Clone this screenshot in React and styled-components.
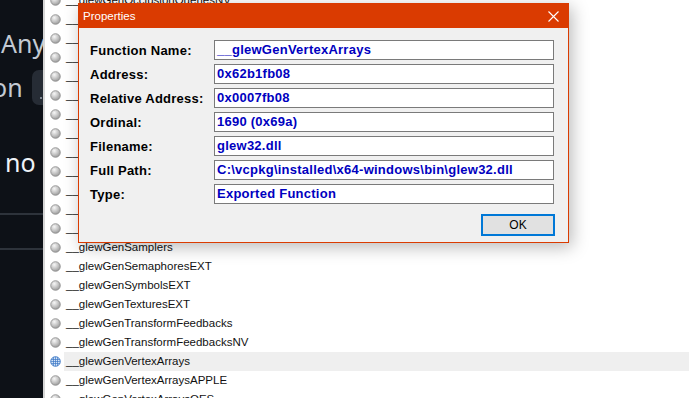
import React from "react";
import styled, { createGlobalStyle } from "styled-components";

const GlobalStyle = createGlobalStyle`
  html, body {
    margin: 0;
    padding: 0;
    background: #ffffff;
  }
  #root {
    width: 689px;
    height: 398px;
    overflow: hidden;
    position: relative;
  }
`;

const Screen = styled.div`
  display: flex;
  width: 689px;
  height: 398px;
  overflow: hidden;
  position: relative;
`;

/* ---------- dark editor strip on the left ---------- */

const DarkPanel = styled.div`
  width: 43px;
  flex: none;
  background: #0d1117;
  display: flex;
  flex-direction: column;
  overflow: hidden;
  font-family: "Noto Sans", "Open Sans", sans-serif;
  font-size: 25px;
`;

const DarkLine = styled.div`
  display: flex;
  align-items: center;
  height: 30px;
  line-height: 30px;
  white-space: nowrap;
  margin-top: ${(p) => p.$top}px;
  margin-left: ${(p) => p.$indent}px;
  color: ${(p) => (p.$bright ? "#eef3f8" : "#c3cad3")};
`;

const Chip = styled.span`
  flex: none;
  width: 30px;
  height: 35px;
  margin-left: 9px;
  border-radius: 7px;
  background: #262c35;
  position: relative;
  &::after {
    content: "";
    position: absolute;
    left: 8px;
    bottom: 6px;
    width: 2px;
    height: 2px;
    background: #7d8590;
  }
`;

const Rule = styled.div`
  height: 2px;
  flex: none;
  margin-top: ${(p) => p.$top}px;
  background: #2d333b;
`;

/* ---------- export list ---------- */

const ListPane = styled.div`
  flex: 1;
  background: #ffffff;
  border-left: 2px solid #d6d6d6;
  overflow: hidden;
  font-family: "Liberation Sans", Arial, sans-serif;
  font-size: 11.5px;
  color: #111111;
`;

const List = styled.div`
  margin-top: -9px;
  display: flex;
  flex-direction: column;
`;

const Row = styled.div`
  display: flex;
  align-items: center;
  height: 19px;
  padding-left: 5px;
`;

const RowLabel = styled.span`
  flex: 1;
  height: 19px;
  line-height: 19px;
  padding-left: 2px;
  margin-left: 3px;
  white-space: nowrap;
  background: ${(p) => (p.$selected ? "#efefef" : "transparent")};
`;

const Bullet = () => (
  <svg width="11" height="11" viewBox="0 0 11 11">
    <defs>
      <radialGradient id="ball" cx="0.38" cy="0.32" r="0.7">
        <stop offset="0" stopColor="#f7f7f7" />
        <stop offset="0.55" stopColor="#c6c6c6" />
        <stop offset="1" stopColor="#9a9a9a" />
      </radialGradient>
    </defs>
    <circle cx="5.5" cy="5.5" r="4.8" fill="url(#ball)" stroke="#8c8c8c" strokeWidth="0.8" />
  </svg>
);

const Globe = () => (
  <svg width="11" height="11" viewBox="0 0 11 11">
    <circle cx="5.5" cy="5.5" r="4.8" fill="#d6e5f7" stroke="#3c78c6" strokeWidth="0.9" />
    <g stroke="#3c78c6" strokeWidth="0.7" fill="none">
      <line x1="1" y1="3.5" x2="10" y2="3.5" />
      <line x1="0.8" y1="5.5" x2="10.2" y2="5.5" />
      <line x1="1" y1="7.5" x2="10" y2="7.5" />
      <line x1="3.5" y1="1" x2="3.5" y2="10" />
      <line x1="5.5" y1="0.8" x2="5.5" y2="10.2" />
      <line x1="7.5" y1="1" x2="7.5" y2="10" />
    </g>
  </svg>
);

const exportsList = [
  "__glewGenOcclusionQueriesNV",
  "__glewGenPathsNV",
  "__glewGenPerfMonitorsAMD",
  "__glewGenProgramPipelines",
  "__glewGenProgramPipelinesEXT",
  "__glewGenProgramsARB",
  "__glewGenProgramsNV",
  "__glewGenQueries",
  "__glewGenQueriesARB",
  "__glewGenQueriesEXT",
  "__glewGenQueryResourceTagNV",
  "__glewGenRenderbuffers",
  "__glewGenRenderbuffersEXT",
  "__glewGenSamplers",
  "__glewGenSemaphoresEXT",
  "__glewGenSymbolsEXT",
  "__glewGenTexturesEXT",
  "__glewGenTransformFeedbacks",
  "__glewGenTransformFeedbacksNV",
  "__glewGenVertexArrays",
  "__glewGenVertexArraysAPPLE",
  "__glewGenVertexArraysOES",
];

/* ---------- properties dialog ---------- */

const Dialog = styled.div`
  position: absolute;
  left: 78px;
  top: 3px;
  width: 489px;
  border: 1px solid #da3b01;
  background: #f0f0f0;
  box-shadow: 3px 4px 16px rgba(0, 0, 0, 0.28);
  font-family: "Liberation Sans", Arial, sans-serif;
`;

const TitleBar = styled.div`
  height: 24px;
  background: #da3b01;
  display: flex;
  align-items: center;
  justify-content: space-between;
  padding: 0 9px 0 4px;
  color: #ffffff;
  font-size: 11.5px;
`;

const CloseIcon = () => (
  <svg width="11" height="11" viewBox="0 0 11 11">
    <path d="M0.5 0.5 L10.5 10.5 M10.5 0.5 L0.5 10.5" stroke="#ffffff" strokeWidth="1.1" />
  </svg>
);

const Body = styled.div`
  padding: 12px 13px 6px 11px;
  display: flex;
  flex-direction: column;
`;

const FieldGrid = styled.div`
  display: grid;
  grid-template-columns: 124px 340px;
  row-gap: 4px;
  align-items: center;
`;

const Label = styled.span`
  font-size: 13px;
  font-weight: bold;
  letter-spacing: 0.25px;
  color: #000000;
`;

const Value = styled.div`
  height: 18px;
  line-height: 18px;
  border: 1px solid #7a7a7a;
  background: #ffffff;
  padding-left: 2px;
  font-size: 13px;
  font-weight: bold;
  letter-spacing: 0.25px;
  color: #0000c0;
  white-space: nowrap;
  overflow: hidden;
`;

const Footer = styled.div`
  display: flex;
  justify-content: flex-end;
  margin-top: 10px;
`;

const OkButton = styled.button`
  width: 74px;
  height: 22px;
  border: 2px solid #0078d7;
  background: #e1e1e1;
  font-family: "Liberation Sans", Arial, sans-serif;
  font-size: 12px;
  color: #000000;
  padding: 0;
`;

const properties = [
  ["Function Name:", "__glewGenVertexArrays"],
  ["Address:", "0x62b1fb08"],
  ["Relative Address:", "0x0007fb08"],
  ["Ordinal:", "1690 (0x69a)"],
  ["Filename:", "glew32.dll"],
  ["Full Path:", "C:\\vcpkg\\installed\\x64-windows\\bin\\glew32.dll"],
  ["Type:", "Exported Function"],
];

export default function App() {
  return (
    <>
      <GlobalStyle />
      <Screen>
        <DarkPanel>
          <DarkLine $top={28} $indent={1}>Any</DarkLine>
          <DarkLine $top={14} $indent={-8}>
            on
            <Chip />
          </DarkLine>
          <DarkLine $top={45} $indent={5} $bright>no</DarkLine>
          <Rule $top={36} />
          <Rule $top={33} />
        </DarkPanel>

        <ListPane>
          <List>
            {exportsList.map((name) => {
              const selected = name === "__glewGenVertexArrays";
              return (
                <Row key={name}>
                  {selected ? <Globe /> : <Bullet />}
                  <RowLabel $selected={selected}>{name}</RowLabel>
                </Row>
              );
            })}
          </List>
        </ListPane>

        <Dialog>
          <TitleBar>
            <span>Properties</span>
            <CloseIcon />
          </TitleBar>
          <Body>
            <FieldGrid>
              {properties.map(([label, value]) => (
                <React.Fragment key={label}>
                  <Label>{label}</Label>
                  <Value>{value}</Value>
                </React.Fragment>
              ))}
            </FieldGrid>
            <Footer>
              <OkButton>OK</OkButton>
            </Footer>
          </Body>
        </Dialog>
      </Screen>
    </>
  );
}
